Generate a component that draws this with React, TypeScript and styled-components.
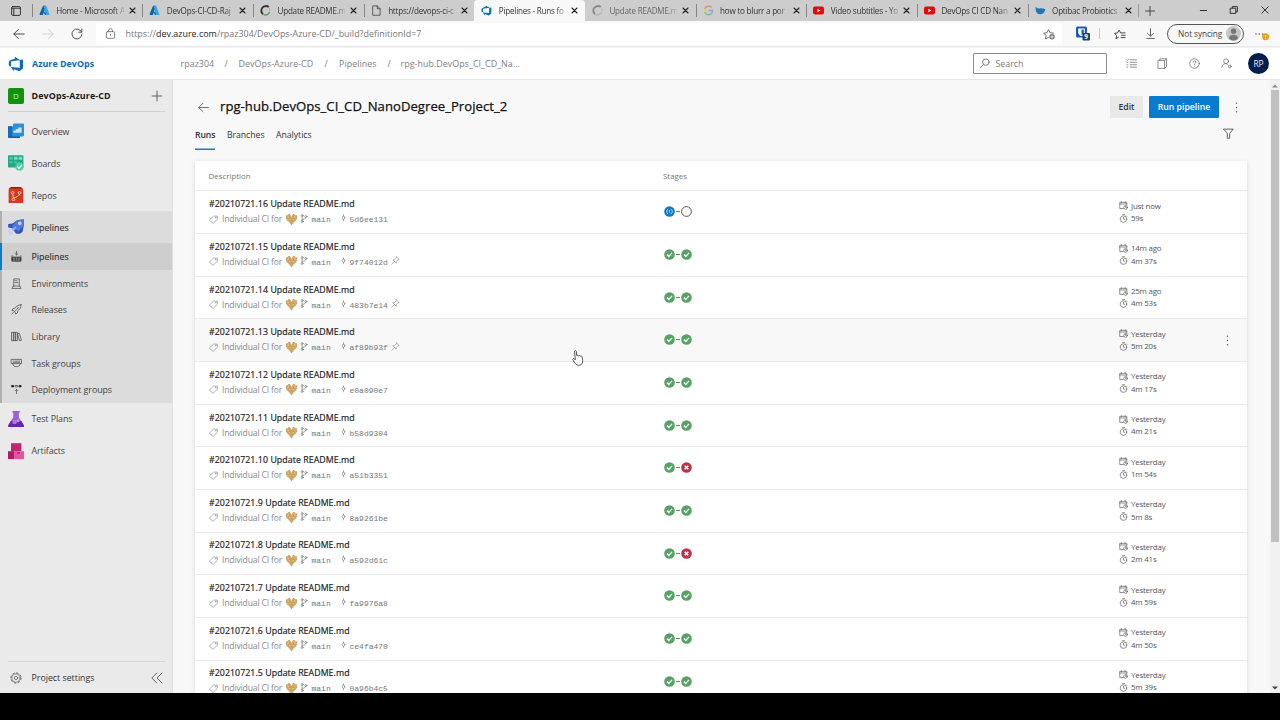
import React from 'react';
import styled, { createGlobalStyle, css } from 'styled-components';

const Global = createGlobalStyle`
  * { box-sizing: border-box; }
  body { margin: 0; background: #000; font-family: "Open Sans", "Noto Sans", sans-serif; font-size: 8.7px; color: #333; overflow: hidden; }
  svg { display: block; flex: none; overflow: visible; }
`;

/* ---------- layout ---------- */
const Screen = styled.div`width: 1280px; height: 720px; background: #000; display: flex; flex-direction: column;`;
const Browser = styled.div`height: 693px; display: flex; flex-direction: column; overflow: hidden; background: #f8f8f8;`;
const Center = styled.div<{ $w: number; $h?: number }>`
  width: ${p => p.$w}px; height: ${p => (p.$h ? p.$h + 'px' : 'auto')};
  flex: none; display: flex; align-items: center; justify-content: center;
`;

/* ---------- browser tabs ---------- */
const TabStrip = styled.div`height: 21px; flex: none; background: #cdcdcd; display: flex; align-items: stretch;`;
const StripStart = styled(Center)`width: 31.67px; height: 21px;`;
const Tab = styled.div<{ $active?: boolean; $line?: boolean }>`
  width: 110.67px; flex: none; display: flex; align-items: center; padding-left: 7px; height: 21px;
  ${p => p.$active && css`background: #f8f8f8; border-radius: 4px 4px 0 0;`}
  ${p => p.$line && css`background: linear-gradient(#858585, #858585) 0 4px / 1px 13px no-repeat;`}
`;
const TabLabel = styled.div<{ $dim?: boolean }>`
  width: 68px; margin-left: 6.5px; white-space: nowrap; font-size: 8.1px; line-height: 14px;
  letter-spacing: -0.22px;
  color: ${p => (p.$dim ? '#666' : '#333')};
  mask-image: linear-gradient(90deg, #000 84%, transparent 104%);
`;
const TabClose = styled.div`width: 16px; display: flex; justify-content: center;`;
const NewTab = styled(Center)`height: 21px; background: linear-gradient(#9a9a9a, #9a9a9a) 0 4px / 1px 13px no-repeat;`;
const WindowButtons = styled.div`margin-left: auto; display: flex; height: 20px; align-items: center;`;

/* ---------- address bar ---------- */
const Toolbar = styled.div`height: 26px; flex: none; background: #f8f8f8; display: flex; align-items: center; padding: 0 0 0 4px; border-bottom: 1px solid #e9e9e9;`;
const AddressBox = styled.div`
  width: 967px; height: 22px; background: #fff; border-radius: 2px; display: flex; align-items: center;
`;
const Url = styled.div`font-size: 8.9px; line-height: 14px; color: #777; white-space: nowrap; letter-spacing: 0.03px; flex: 1; b { font-weight: 400; color: #222; }`;
const ToolDivider = styled.div`width: 1px; height: 11px; background: #c8c8c8; margin: 0 5px 0 0;`;
const SyncPill = styled.div`
  width: 77px; height: 20px; border: 1px solid #555; border-radius: 10px; display: flex; align-items: center;
  padding-left: 10px; gap: 6px; font-size: 8.3px; color: #444; white-space: nowrap; letter-spacing: -0.1px;
  span { width: 42px; }
`;

/* ---------- product header ---------- */
const Header = styled.div`height: 33px; flex: none; background: #fff; border-bottom: 1px solid #e6e6e6; border-top: 1px solid #f1f1f1; display: flex; align-items: center;`;
const Brand = styled.div`width: 180.5px; padding-left: 8px; display: flex; align-items: center; gap: 8px; color: #1267b4; font-weight: 700; font-size: 8.9px; letter-spacing: 0.02px;`;
const Crumb = styled.div<{ $w: number }>`width: ${p => p.$w}px; color: #808080; white-space: nowrap; font-size: 8.9px; letter-spacing: 0.05px;`;
const SearchBox = styled.div`
  width: 134px; height: 21px; margin-left: auto; border: 1px solid #8c8c8c; border-radius: 1px; display: flex; align-items: center; gap: 5.5px; padding-left: 5px; color: #7b7b7b; font-size: 8.8px;
`;
const Avatar = styled.div`
  width: 21px; height: 21px; border-radius: 50%; background: #041d4d; color: #e9edf5; display: flex; align-items: center; justify-content: center; font-size: 8.4px; margin-right: 11px; margin-left: 6px;
`;

/* ---------- sidebar ---------- */
const Body = styled.div`display: flex; flex: 1; min-height: 0;`;
const Sidebar = styled.nav`width: 173px; flex: none; background: #eaeaea; border-right: 1px solid #e0e0e0; display: flex; flex-direction: column;`;
const ProjectRow = styled.div`
  height: 32px; margin: 0 7px 3px 8px; border-bottom: 1px solid #d2d2d2; display: flex; align-items: center; flex: none;
  font-size: 8.9px; font-weight: 700; color: #1c1c1c; letter-spacing: 0.12px;
`;
const ProjectBadge = styled.div`width: 16px; height: 16px; border-radius: 2px; background: #10930f; color: #c6efc3; display: flex; align-items: center; justify-content: center; font-weight: 400; font-size: 8px; margin-right: 7.5px;`;
const NavItem = styled.div<{ $open?: boolean }>`
  height: 32px; flex: none; display: flex; align-items: center; gap: 7.5px; padding-left: 8px; font-size: 8.9px; letter-spacing: -0.08px; color: #444;
  ${p => p.$open && css`background: #dcdcdc; box-shadow: inset 2px 0 0 #b0b0b0; letter-spacing: 0; -webkit-text-stroke: 0.15px #333; color: #333;`}
`;
const SubItem = styled(NavItem)<{ $current?: boolean }>`
  height: 26.667px; background: ${p => (p.$current ? '#cecece' : '#dcdcdc')};
  box-shadow: inset 2px 0 0 ${p => (p.$current ? '#0a7ac9' : '#b0b0b0')}; padding-top: 0.5px;
  ${p => p.$current && css`letter-spacing: 0; -webkit-text-stroke: 0.15px #333; color: #333;`}
`;
const SettingsRow = styled.div`margin: auto 7px 0 8px; height: 32px; border-top: 1px solid #d6d6d6; display: flex; align-items: center; gap: 7.5px; font-size: 8.8px; color: #333; padding-top: 1px;`;
const PushRight = styled.div`margin-left: auto;`;

/* ---------- main ---------- */
const Main = styled.main`flex: 1; min-width: 0; background: #f8f8f8; padding: 16px 17px 0 22px; overflow: hidden;`;
const TitleRow = styled.div`height: 22px; display: flex; align-items: center;`;
const Title = styled.h1`margin: 0 auto 3px 8px; font-size: 13.1px; line-height: 18px; font-weight: 400; -webkit-text-stroke: 0.25px #111; color: #111; white-space: nowrap; letter-spacing: 0.04px;`;
const Button = styled.button<{ $primary?: boolean }>`
  height: 22px; border: 0; padding: 0; border-radius: 1px; font: 600 8.7px "Open Sans", sans-serif; 
  width: ${p => (p.$primary ? 70 : 33)}px; margin-left: ${p => (p.$primary ? 6 : 0)}px;
  background: ${p => (p.$primary ? '#0a7cd0' : '#e9e9e9')}; color: ${p => (p.$primary ? '#fff' : '#333')};
`;
const PivotRow = styled.div`height: 32px; display: flex; align-items: stretch; gap: 11.5px;`;
const Pivot = styled.div<{ $active?: boolean }>`
  line-height: 34px; font-size: 8.7px; color: #333; white-space: nowrap; letter-spacing: -0.03px;
  ${p => p.$active && css`font-weight: 600; letter-spacing: -0.1px; box-shadow: inset 0 -1.5px 0 #1a7fb0;`}
`;
const Card = styled.div`margin-top: 11px; width: 1052px; background: #fff; box-shadow: 0 1px 5px rgba(0,0,0,.13);`;
const gridColumns = css`display: grid; grid-template-columns: 454.5px 455.5px 107px 1fr;`;
const HeadRow = styled.div`${gridColumns} height: 29.4px; align-items: center; padding: 0 0 0 13.5px; font-size: 7.9px; color: #777;`;
const Run = styled.div<{ $hover?: boolean }>`
  ${gridColumns} height: 42.667px; padding-left: 14px; align-items: center; border-top: 1px solid #ebebeb;
  background: ${p => (p.$hover ? '#f8f8f8' : '#fff')};
`;
const RunTitle = styled.div`font-size: 8.8px; line-height: 15px; letter-spacing: 0.06px; -webkit-text-stroke: 0.18px #222; color: #222; white-space: nowrap; margin-top: -0.5px;`;
const RunMeta = styled.div`display: flex; align-items: center; height: 15px; font-size: 8.6px; color: #8a8a8a; white-space: nowrap; margin-top: -0.5px;`;
const MetaText = styled.span`width: 63.5px; margin-left: 4px; letter-spacing: -0.16px;`;
const MetaIcon = styled(Center)`padding-bottom: 2px;`;
const Mono = styled.span<{ $w: number }>`width: ${p => p.$w}px; font: 8px "Liberation Mono", monospace; color: #777; padding-top: 1px;`;
const Stages = styled.div`display: flex; align-items: center; margin: -0.5px 0 0 0;`;
const StageLink = styled.div<{ $blue?: boolean }>`width: 4px; height: 1px; margin: 0 1px; background: ${p => (p.$blue ? '#3d86b8' : '#4b9c58')};`;
const Times = styled.div`font-size: 7.9px; color: #555; margin-top: -0.6px; white-space: nowrap; letter-spacing: -0.2px;`;
const TimeLine = styled.div`display: flex; align-items: center; gap: 3px; height: 12.4px;`;

const Scrollbar = styled.div`width: 10px; flex: none; background: #f1f1f1; display: flex; flex-direction: column; align-items: center; padding: 4px 1px 3px 0; justify-content: space-between;`;
const Thumb = styled.div`width: 8px; height: 452px; background: #c1c1c1; margin: 2px 0 auto;`;
const Cursor = styled.div`position: absolute; left: 571.5px; top: 350px;`;

/* ---------- icons ---------- */
type SvgProps = { w?: number; h?: number; vb?: string; c?: string; sw?: number; children?: React.ReactNode };
const Line = ({ w = 12, h, vb = '0 0 12 12', c = '#444', sw = 0.9, children }: SvgProps) => (
  <svg width={w} height={h ?? w} viewBox={vb} fill="none" stroke={c} strokeWidth={sw} strokeLinecap="round" strokeLinejoin="round">{children}</svg>
);
const AzureIcon = () => (
  <svg width="11" height="11" viewBox="0 0 11 11"><path d="M4 .8h3L3.9 10H1.3a.7.7 0 0 1-.7-.9z" fill="#12609f" /><path d="M4.2 6.8h4.6L9.5 10H6z" fill="#0a6bc0" /><path d="M4.4.8h2.8l3.2 8.4a.6.6 0 0 1-.6.8H7.2z" fill="#35a8ea" /></svg>
);
const DevOpsIcon = ({ s = 12 }: { s?: number }) => (
  <svg width={s} height={s} viewBox="0 0 16 16" fill="#0f6cbd"><path d="M15 3.6v8.7L11.4 15.2 5.8 13.2v2L2.6 11l9.2.8V3.9zM12 4 6.8.7v2L2 4.2.8 5.8v3.9l2.2 1V5.5z" /></svg>
);
const GithubRing = ({ dim }: { dim?: boolean }) => (
  <svg width="11" height="11" viewBox="0 0 11 11" fill="none"><path d="M8.8 2.1A4.4 4.4 0 1 0 3 9.2" stroke={dim ? '#888' : '#333'} strokeWidth="1.9" /><path d="M3.6 9.6A4.4 4.4 0 0 0 9.6 7" stroke={dim ? '#a9bcae' : '#4f9a60'} strokeWidth="1.3" /><path d="M9.8 6.2A4.4 4.4 0 0 0 8.8 2.2" stroke={dim ? '#bbb' : '#aaa'} strokeWidth="1" /></svg>
);
const FileIcon = () => <Line w={11}><path d="M2.3 1h4.6l3 3v7.2H2.3zM6.8 1v3.1h3" /></Line>;
const GoogleIcon = () => (
  <svg width="11" height="11" viewBox="0 0 11 11" fill="none" strokeWidth="1.5"><path d="M8.7 2.4A4.2 4.2 0 0 0 1.7 3.8" stroke="#e58a82" /><path d="M1.7 3.8a4.2 4.2 0 0 0 0 3.5" stroke="#ecc766" /><path d="M1.7 7.3a4.2 4.2 0 0 0 6.5 1.5" stroke="#7fbf8d" /><path d="M8.2 8.8A4 4 0 0 0 9.6 5.6H5.6" stroke="#86a9e6" /></svg>
);
const YoutubeIcon = () => <svg width="11" height="11" viewBox="0 0 11 11"><rect x="0" y="1.6" width="11" height="7.8" rx="1.8" fill="#e00b0b" /><path d="M4.4 3.7v3.6l3-1.8z" fill="#fff" /></svg>;
const OptibacIcon = () => <svg width="11" height="11" viewBox="0 0 11 11"><path d="M.6 1.6c.8 1.400 2.400 2 4 1.800C6.600 3.200 8.400 3.400 10.400 4.300c-.4 2.400-1.900 4.700-4.700 4.900C2.200 9.600.4 7 .6 1.600z" fill="#2178b0" /></svg>;
const CloseX = () => <Line w={7} vb="0 0 7 7" c="#222" sw={1.1}><path d="M1 1l5 5M6 1L1 6" /></Line>;

const Arrow = ({ c = '#333', right, s = 12 }: { c?: string; right?: boolean; s?: number }) => (
  <Line w={s} c={c}>{right ? <path d="M.8 6h10.4M6.6 1.4L11.2 6l-4.6 4.6" /> : <path d="M11.2 6H.8M5.4 1.4L.8 6l4.6 4.6" />}</Line>
);
const Kebab = () => <svg width="3" height="11" viewBox="0 0 3 11" fill="#555"><circle cx="1.5" cy="1.2" r=".7" /><circle cx="1.5" cy="5.5" r=".7" /><circle cx="1.5" cy="9.8" r=".7" /></svg>;

const OverviewIcon = () => (
  <svg width="16" height="16" viewBox="0 0 16 16"><path d="M0 3.2h3V13h9v2H1a1 1 0 0 1-1-1z" fill="#0c5fae" /><path d="M0 3.2h5V1.5L6 .6h9.2a.8.8 0 0 1 .8.8v11.2l-1 1H4.2L0 15z" fill="#2f8fdc" /><path d="M0 3.6h4.2v10L2.4 15H1a1 1 0 0 1-1-1z" fill="#1668b8" /><path d="M5.4 9.8V7.4h2.4V6h2.4V4.6h3.4v5.2z" fill="#c7e6fb" /></svg>
);
const BoardsIcon = () => (
  <svg width="16" height="16" viewBox="0 0 16 16"><rect y=".2" width="15.4" height="12.4" rx=".8" fill="#22a884" /><path d="M6 1.800h3.600v3H6zM10.800 1.800h3.400v3h-3.400z" fill="#7fdcc0" /><path d="M1.200 1.800h3.600v3H1.200zM1.200 6.200h3.600v2H1.200zM6 6.200h3v2H6z" fill="#45c79f" /><circle cx="11.500" cy="11.500" r="4.300" fill="#52cda5" /><path d="M9.400 11.600l1.600 1.600 2.800-3.200" stroke="#fff" strokeWidth="1.300" fill="none" /></svg>
);
const ReposIcon = () => (
  <svg width="16" height="16" viewBox="0 0 16 16"><path d="M3.400 0h8.400c2 0 3.400 1.600 3.400 3.600V16H.6V3C.6 1.400 1.800 0 3.400 0z" fill="#d23c1c" /><path d="M3.400 0h8.400l2.400 1.600H2z" fill="#8f1f0c" /><g stroke="#f9c8b8" fill="none" strokeWidth="1"><circle cx="4.600" cy="5.800" r="1.300" /><circle cx="11.600" cy="5.800" r="1.300" /><circle cx="5.400" cy="12.400" r="1.300" /><path d="M4.800 7.100l.5 4M11.400 7.100c-.4 2.400-3 2.600-5.400 4" /></g></svg>
);
const PipelinesIcon = () => (
  <svg width="16" height="16" viewBox="0 0 16 16"><path d="M9 1.200L15.800.2v6.400l-1.200 6.200-2.600 2H8l-3.600-5.600L.2 8.600V5l4.400-.6z" fill="#3454bd" /><path d="M9 1.200L15.800.2v6.400l-5.600 5.800L3.800 7.600z" fill="#5378e0" /><circle cx="11.800" cy="4.400" r="1.800" fill="#c9d6fb" /><path d="M.6 10.600h2.200V13h2v3H.6z" fill="#c3cff6" /><path d="M3.600 10.600l3.600-3 1.400 1.300-3.200 3.400z" fill="#93aaf2" /></svg>
);
const TestPlansIcon = () => (
  <svg width="16" height="16" viewBox="0 0 16 16"><path d="M4.400 0h7.400v1.400h-1v4.800l5 8c.5.9 0 1.800-1 1.800H1.300c-1 0-1.500-.9-1-1.800l5-8V1.400h-.9z" fill="#9661d2" /><path d="M2.800 10h10.600l2.400 4.200c.5.9 0 1.800-1 1.800H1.300c-1 0-1.500-.9-1-1.800z" fill="#6527ac" /><circle cx="6.600" cy="11" r="2.300" fill="#a87ae2" /><circle cx="10" cy="9.800" r="1.500" fill="#b996ec" /></svg>
);
const ArtifactsIcon = () => (
  <svg width="16" height="16" viewBox="0 0 16 16"><path d="M3 .2h10.400v8.200H3z" fill="#c02573" /><path d="M0 8.200h6.400V16H0z" fill="#b01c64" /><path d="M6.200 8.200H16V16H6.200z" fill="#e0559d" /><path d="M9 10h3" stroke="#9c1757" strokeWidth="1" /></svg>
);
const SubSvg = ({ children }: { children: React.ReactNode }) => <Center $w={16}><Line w={11} c="#4a4a4a" sw={0.8}>{children}</Line></Center>;
const BuildIcon = () => <SubSvg><path d="M6 .5v3.600M4.500 2.800L6 4.200l1.500-1.400M1.200 5v6h9.600V5" /><path d="M1.200 6.600h9.600V11H1.200z" fill="#333" /><path d="M2.800 7.900h.8M5.600 7.900h.8M8.400 7.900h.8M2.800 9.800h1M5.500 9.800h1M8.200 9.800h1" stroke="#ddd" /></SubSvg>;
const EnvIcon = () => <SubSvg><path d="M3 9V1h6v8M1.200 11l1-2.200h7.600l1 2.200zM4.400 3h2M4.400 5h3" /></SubSvg>;
const ReleaseIcon = () => <SubSvg><path d="M11 .8C8 .9 6 2.200 4.400 4.600L2.200 5 1 7l2 .2 1.600 1.600.3 2.200 2-1.200.4-2.300C9.800 6 11 4 11 .8zM3 8.600L1 10.900M7.400 3.500l1 1M4.400 7.600l3-3" /></SubSvg>;
const LibraryIcon = () => <SubSvg><path d="M1 1.500h2v9H1zM3 1.500h2.200v9H3zM5.200 1.500h2v9h-2zM7.500 3l1.600-.6 2.300 7.700-1.600.5z" /></SubSvg>;
const TaskIcon = () => <SubSvg><path d="M.6 1.500h10.800v4.600H.6zM2 6.400c.4 2.400 1.600 3 4 3s3.600-.6 4-3M2.500 3.400h1M5 3.400h2M8.500 3.400h1M2.500 4.700h7" /></SubSvg>;
const DeployIcon = () => <SubSvg><path d="M1 1.600h2v1.600H1zM9 1.600h2v1.600H9z" fill="#222" stroke="#222" /><path d="M5 1.600h2v1.600H5z" /><path d="M6 10.500V6M4.700 7.200L6 5.900l1.300 1.300" /></SubSvg>;
const GearIcon = () => <Center $w={16}><Line w={12} sw={0.8} c="#666"><circle cx="6" cy="6" r="4.200" /><circle cx="6" cy="6" r="1.700" /><circle cx="6" cy="6" r="5.100" strokeDasharray="1.600 2.400" strokeWidth="1" /></Line></Center>;

const TagIcon = () => <Line w={9} c="#8a8a8a" sw={0.9}><path d="M6.500 1.500h4.700v4.200l-5.600 5.500L.8 7.200z" /><circle cx="9" cy="3.600" r=".4" /></Line>;
const Identicon = () => (
  <svg width="11" height="11" viewBox="0 0 11 11"><path d="M2.200 0h2v1.300h.7v1.200h1.200V1.300h.7V0h2v1.300H11v4.200H9.800v1.400H8.600v1.400H7.400v1.400H6.200V11H4.800V9.700H3.600V8.300H2.400V6.900H1.200V5.500H0V1.300h2.200z" fill="#cda463" /><path d="M1.600 2.600h1.200v1.200H1.600zM8.200 2.600h1.200v1.200H8.200zM3.400 5h.9v.9h-.9zM6.700 5h.9v.9h-.9z" fill="#ead2a8" /></svg>
);
const BranchIcon = () => <Line w={8} h={9} vb="0 0 10 12" c="#777" sw={0.9}><circle cx="2.500" cy="2" r="1.300" /><circle cx="2.500" cy="10" r="1.300" /><circle cx="7.500" cy="3.400" r="1.300" /><path d="M2.500 3.300v5.400M7.500 4.700c0 2-3 1.800-5 2.600" /></Line>;
const CommitIcon = () => <Line w={5} h={8} vb="0 0 6 12" c="#777" sw={0.9}><path d="M3 1v2.200M3 8v2.200" /><ellipse cx="3" cy="5.600" rx="2" ry="2.400" /></Line>;
const PinIcon = () => <Line w={9} c="#8a8a8a"><path d="M7.200 1l3.800 3.800-1.600.3L7.200 7.300l-.3 2.200L2.500 5.100l2.200-.3 2.200-2.200zM4.700 7.300L1 11" /></Line>;
const CalendarIcon = () => <Line w={9} c="#666" sw={0.95}><path d="M5.800 10H1V1.800h9.400v4M1 4h9.400M3.200.8v1.800M8.200.8v1.800" /><circle cx="8.800" cy="8.600" r="2.500" /><path d="M8.800 7.300v1.400h1" /></Line>;
const ClockIcon = () => <Line w={9} c="#666" sw={0.95}><circle cx="6" cy="6.800" r="4.400" /><path d="M6 4.500v2.500h1.600M4.800.8h2.400M9.600 2.400l.8.800" /></Line>;

const StagePass = () => <svg width="11" height="11" viewBox="0 0 11 11"><circle cx="5.500" cy="5.500" r="5.300" fill="#55a362" /><path d="M3 5.600l1.800 1.800 3.200-3.500" stroke="#fff" strokeWidth="1.400" fill="none" /></svg>;
const StageFail = () => <svg width="11" height="11" viewBox="0 0 11 11"><circle cx="5.500" cy="5.500" r="5.300" fill="#b5354a" /><path d="M3.700 3.700l3.600 3.600M7.300 3.700L3.700 7.300" stroke="#fff" strokeWidth="1.500" /></svg>;
const StageRunning = () => <svg width="11" height="11" viewBox="0 0 11 11" fill="none"><circle cx="5.500" cy="5.500" r="5.300" fill="#0a78c8" /><path d="M4.200 3A2.800 2.800 0 0 0 4.200 8M6.800 3A2.800 2.800 0 0 1 6.800 8" stroke="#c4e2f6" strokeWidth=".9" /><path d="M6.300 4.200L4.900 5.500l1.400 1.300" stroke="#e8f4fc" strokeWidth=".9" /></svg>;
const StagePending = () => <svg width="11" height="11" viewBox="0 0 11 11"><circle cx="5.500" cy="5.500" r="4.900" fill="#fff" stroke="#555" strokeWidth="1" /></svg>;

/* ---------- data ---------- */
type TabInfo = { icon: React.ReactNode; text: string; active?: boolean; line?: boolean; dim?: boolean };
const tabs: TabInfo[] = [
  { icon: <AzureIcon />, text: 'Home - Microsoft A', line: true },
  { icon: <AzureIcon />, text: 'DevOps-CI-CD-Raj', line: true },
  { icon: <GithubRing />, text: 'Update README.m', line: true },
  { icon: <FileIcon />, text: 'https://devops-ci-c', line: true },
  { icon: <DevOpsIcon s={11} />, text: 'Pipelines - Runs fo', active: true },
  { icon: <GithubRing dim />, text: 'Update README.m', dim: true },
  { icon: <GoogleIcon />, text: 'how to blurr a por', line: true },
  { icon: <YoutubeIcon />, text: 'Video subtitles - Yo', line: true },
  { icon: <YoutubeIcon />, text: 'DevOps CI CD Nan', line: true },
  { icon: <OptibacIcon />, text: 'Optibac Probiotics', line: true },
];
type RunInfo = { n: number; sha: string; when: string; took: string; pin?: boolean; state?: 'running' | 'failed'; hover?: boolean };
const runs: RunInfo[] = [
  { n: 16, sha: '5d6ee131', when: 'Just now', took: '59s', state: 'running' },
  { n: 15, sha: '9f74012d', when: '14m ago', took: '4m 37s', pin: true },
  { n: 14, sha: '483b7e14', when: '25m ago', took: '4m 53s', pin: true },
  { n: 13, sha: 'af89b93f', when: 'Yesterday', took: '5m 20s', pin: true, hover: true },
  { n: 12, sha: 'e0a090e7', when: 'Yesterday', took: '4m 17s' },
  { n: 11, sha: 'b58d9304', when: 'Yesterday', took: '4m 21s' },
  { n: 10, sha: 'a51b3351', when: 'Yesterday', took: '1m 54s', state: 'failed' },
  { n: 9, sha: '8a9261be', when: 'Yesterday', took: '5m 8s' },
  { n: 8, sha: 'a592d61c', when: 'Yesterday', took: '2m 41s', state: 'failed' },
  { n: 7, sha: 'fa9976a8', when: 'Yesterday', took: '4m 59s' },
  { n: 6, sha: 'ce4fa470', when: 'Yesterday', took: '4m 50s' },
  { n: 5, sha: '0a96b4c5', when: 'Yesterday', took: '5m 39s' },
];

const RunRow = ({ run }: { run: RunInfo }) => (
  <Run $hover={run.hover}>
    <div>
      <RunTitle>#20210721.{run.n} Update README.md</RunTitle>
      <RunMeta>
        <TagIcon /><MetaText>Individual CI for</MetaText><Identicon />
        <MetaIcon $w={15}><BranchIcon /></MetaIcon><Mono $w={25.5}>main</Mono>
        <MetaIcon $w={12.5}><CommitIcon /></MetaIcon><Mono $w={41.5}>{run.sha}</Mono>
        {run.pin && <MetaIcon $w={9}><PinIcon /></MetaIcon>}
      </RunMeta>
    </div>
    <Stages>
      {run.state === 'running' ? <StageRunning /> : <StagePass />}
      <StageLink $blue={run.state === 'running'} />
      {run.state === 'running' ? <StagePending /> : run.state === 'failed' ? <StageFail /> : <StagePass />}
    </Stages>
    <Times>
      <TimeLine><CalendarIcon />{run.when}</TimeLine>
      <TimeLine><ClockIcon />{run.took}</TimeLine>
    </Times>
    {run.hover ? <Kebab /> : <span />}
  </Run>
);

export default function App() {
  return (
    <Screen>
      <Global />
      <Browser>
        <TabStrip>
          <StripStart $w={32}><Line w={10} vb="0 0 10 10" c="#333" sw={1}><rect x=".6" y=".6" width="8.800" height="8.800" rx="1.200" /><path d="M.6 2.200h8.800M2.800 2.500v6.500" /></Line></StripStart>
          {tabs.map((t, i) => (
            <Tab key={i} $active={t.active} $line={t.line}>
              {t.icon}<TabLabel $dim={t.dim}>{t.text}</TabLabel><TabClose><CloseX /></TabClose>
            </Tab>
          ))}
          <NewTab $w={23}><Line w={10} vb="0 0 10 10" sw={1}><path d="M5 .5v9M.5 5h9" /></Line></NewTab>
          <WindowButtons>
            <Center $w={30}><Line w={7} vb="0 0 7 7" c="#222"><path d="M.3 3.500h6.400" /></Line></Center>
            <Center $w={31}><Line w={8} vb="0 0 8 8" c="#222"><path d="M.6 2.200h5.200v5.200H.6zM2.300 2V.6h5.100v5.200H6" /></Line></Center>
            <Center $w={31}><Line w={8} vb="0 0 8 8" c="#222"><path d="M.8.8l6.400 6.400M7.200.8L.8 7.200" /></Line></Center>
          </WindowButtons>
        </TabStrip>
        <Toolbar>
          <Center $w={29}><Arrow /></Center>
          <Center $w={30}><Arrow right c="#cfcfcf" /></Center>
          <Center $w={28}><Line w={12}><path d="M10.600 4A5 5 0 1 0 11 6M10.800 1v3.200H7.600" /></Line></Center>
          <Center $w={5} />
          <AddressBox>
            <Center $w={29.500}><Line w={11} c="#666"><rect x="1.500" y="4" width="9" height="7.200" rx="1.200" /><path d="M3.800 4V3a2.200 2.200 0 0 1 4.400 0v1M6 7v1" /></Line></Center>
            <Url>https://<b>dev.azure.com</b>/rpaz304/DevOps-Azure-CD/_build?definitionId=7</Url>
            <Center $w={24.500}><Line w={12} c="#555" sw={0.85}><path d="M5.500 9.400L2.500 11l.6-3.400L.7 5.200l3.300-.5L5.500 1.700 7 4.700l3.300.5" /><circle cx="9" cy="8.800" r="2.700" fill="#777" stroke="none" /><path d="M7.800 8.800h2.400M9 7.600V10" stroke="#eee" /></Line></Center>
          </AddressBox>
          <Center $w={37}><Center $w={5} />
            <svg width="15" height="15" viewBox="0 0 15 15"><rect x="1" y=".5" width="11" height="11" rx="1.500" fill="#1a56b8" /><path d="M3.200 2.500h6.600v4c0 2-2 3.200-3.300 3.800C5.200 9.700 3.200 8.500 3.200 6.500z" fill="#fff" /><path d="M6.500 3.500h2.300v3c0 1-1.200 1.900-2.300 2.500z" fill="#1a56b8" /><rect x="7.500" y="7" width="7.500" height="7.500" rx="1" fill="#1d4256" /><text x="9.300" y="13.200" fontSize="6.500" fontWeight="700" fill="#fff" fontFamily="Open Sans">9</text></svg>
          </Center>
          <ToolDivider />
          <Center $w={31}><Line w={12} c="#333"><path d="M4.500 9.200L2 10.800l.6-3.200L.6 5.400l2.900-.5 1.600-2.800 1.500 2.800h4.500M7.500 7.300h3.700M7 9.600h4.200" /></Line></Center>
          <Center $w={29}><Line w={11} c="#444"><path d="M6 .8v8M2.800 5.800L6 9l3.200-3.200M2 11.400h8" /></Line></Center>
          <Center $w={2.500} />
          <SyncPill><span>Not syncing</span><svg width="15" height="15" viewBox="0 0 15 15"><circle cx="7.500" cy="7.500" r="7.500" fill="#c6c6c6" /><circle cx="7.500" cy="5.200" r="2.700" fill="#777" /><path d="M2.900 12.600c0-5 9.200-5 9.200 0-2.700 2.500-6.500 2.500-9.200 0z" fill="#777" /></svg></SyncPill>
          <Center $w={36}><svg width="14" height="14" viewBox="0 0 14 14"><g fill="#555"><circle cx="1" cy="7" r=".8" /><circle cx="4.300" cy="7" r=".8" /><circle cx="7.600" cy="7" r=".8" /></g><circle cx="10.600" cy="9.800" r="3.500" fill="#e8a020" /><path d="M10.600 8v2.200M10.600 11v.6" stroke="#fff" strokeWidth=".9" /></svg></Center>
        </Toolbar>
        <Header>
          <Brand><DevOpsIcon s={16} />Azure DevOps</Brand>
          <Crumb $w={44}>rpaz304</Crumb><Crumb $w={14}>/</Crumb>
          <Crumb $w={86}>DevOps-Azure-CD</Crumb><Crumb $w={14.5}>/</Crumb>
          <Crumb $w={48.500}>Pipelines</Crumb><Crumb $w={13}>/</Crumb>
          <Crumb $w={130}>rpg-hub.DevOps_CI_CD_Na...</Crumb>
          <SearchBox><Line w={11} c="#666"><circle cx="7.500" cy="4.500" r="3.500" /><path d="M5 7L1 11" /></Line>Search</SearchBox>
          <Center $w={8} />
          <Center $w={32}><Line w={11} c="#777"><path d="M4.500 2h7M4.500 4.700h7M4.500 7.400h7M4.500 10h7M1 2l.6.500L2.800 1.500M1 4.700h1M1 7.400h1M1 10h1" /></Line></Center>
          <Center $w={31}><Line w={11} c="#777"><path d="M1.500 2.800h6.800v8.600H1.500zM3 2.500V.9h7.300v8.500L8.500 11M8.300 2.800l2-1.900" /></Line></Center>
          <Center $w={32}><Line w={11} c="#777"><circle cx="6" cy="6" r="5.200" /><path d="M4.500 4.700a1.500 1.500 0 1 1 2.200 1.300c-.6.300-.7.600-.7 1.200M6 8.800v.1" /></Line></Center>
          <Center $w={32}><Line w={11} c="#777"><circle cx="5.500" cy="3.500" r="2.600" /><path d="M1 10.500c0-5 5-5.500 6.500-3.300" /><circle cx="9.600" cy="9.300" r="1.500" /></Line></Center>
          <Avatar>RP</Avatar>
        </Header>
        <Body>
          <Sidebar>
            <ProjectRow><ProjectBadge>D</ProjectBadge>DevOps-Azure-CD<PushRight><Center $w={17}><Line w={10} vb="0 0 10 10" c="#555"><path d="M5 .2v9.600M.2 5h9.600" /></Line></Center></PushRight></ProjectRow>
            <NavItem><OverviewIcon />Overview</NavItem>
            <NavItem><BoardsIcon />Boards</NavItem>
            <NavItem><ReposIcon />Repos</NavItem>
            <NavItem $open><PipelinesIcon />Pipelines</NavItem>
            <SubItem $current><BuildIcon />Pipelines</SubItem>
            <SubItem><EnvIcon />Environments</SubItem>
            <SubItem><ReleaseIcon />Releases</SubItem>
            <SubItem><LibraryIcon />Library</SubItem>
            <SubItem><TaskIcon />Task groups</SubItem>
            <SubItem><DeployIcon />Deployment groups</SubItem>
            <NavItem><TestPlansIcon />Test Plans</NavItem>
            <NavItem><ArtifactsIcon />Artifacts</NavItem>
            <SettingsRow><GearIcon />Project settings<PushRight><Center $w={17}><Line w={12} c="#555"><path d="M5.800 1L.8 6l5 5M11 1L6 6l5 5" /></Line></Center></PushRight></SettingsRow>
          </Sidebar>
          <Main>
            <TitleRow>
              <Center $w={17}><Arrow c="#555" s={11} /></Center>
              <Title>rpg-hub.DevOps_CI_CD_NanoDegree_Project_2</Title>
              <Button>Edit</Button><Button $primary>Run pipeline</Button>
              <Center $w={34}><Kebab /></Center>
            </TitleRow>
            <PivotRow>
              <Pivot $active>Runs</Pivot><Pivot>Branches</Pivot><Pivot>Analytics</Pivot>
              <PushRight><Center $w={50} $h={31}><Line w={11} c="#444"><path d="M.8 1.200h10.400L7.300 6v5.200H4.700V6z" /></Line></Center></PushRight>
            </PivotRow>
            <Card>
              <HeadRow><span>Description</span><span>Stages</span></HeadRow>
              {runs.map(r => <RunRow key={r.n} run={r} />)}
            </Card>
          </Main>
          <Scrollbar>
            <svg width="6" height="4" viewBox="0 0 6 4"><path d="M0 3.500L3 .5l3 3z" fill="#8a8a8a" /></svg>
            <Thumb />
            <svg width="6" height="4" viewBox="0 0 6 4"><path d="M0 .5l3 3 3-3z" fill="#444" /></svg>
          </Scrollbar>
        </Body>
      </Browser>
      <Cursor>
        <svg width="12" height="16" viewBox="0 0 12 16"><path d="M2.600 1.500c0-1.100 1.700-1.100 1.800 0l.3 4.200c.3-.7 1.600-.6 1.800.2.400-.6 1.500-.5 1.800.3.500-.5 1.600-.2 1.800.6l.6 3.700c.2 2-.8 4.500-3 4.700-2.200.2-3.600-.2-4.600-2L.8 9.800c-.5-1 .8-1.700 1.600-.9l.9 1z" fill="#fff" stroke="#444" strokeWidth=".9" /></svg>
      </Cursor>
    </Screen>
  );
}
